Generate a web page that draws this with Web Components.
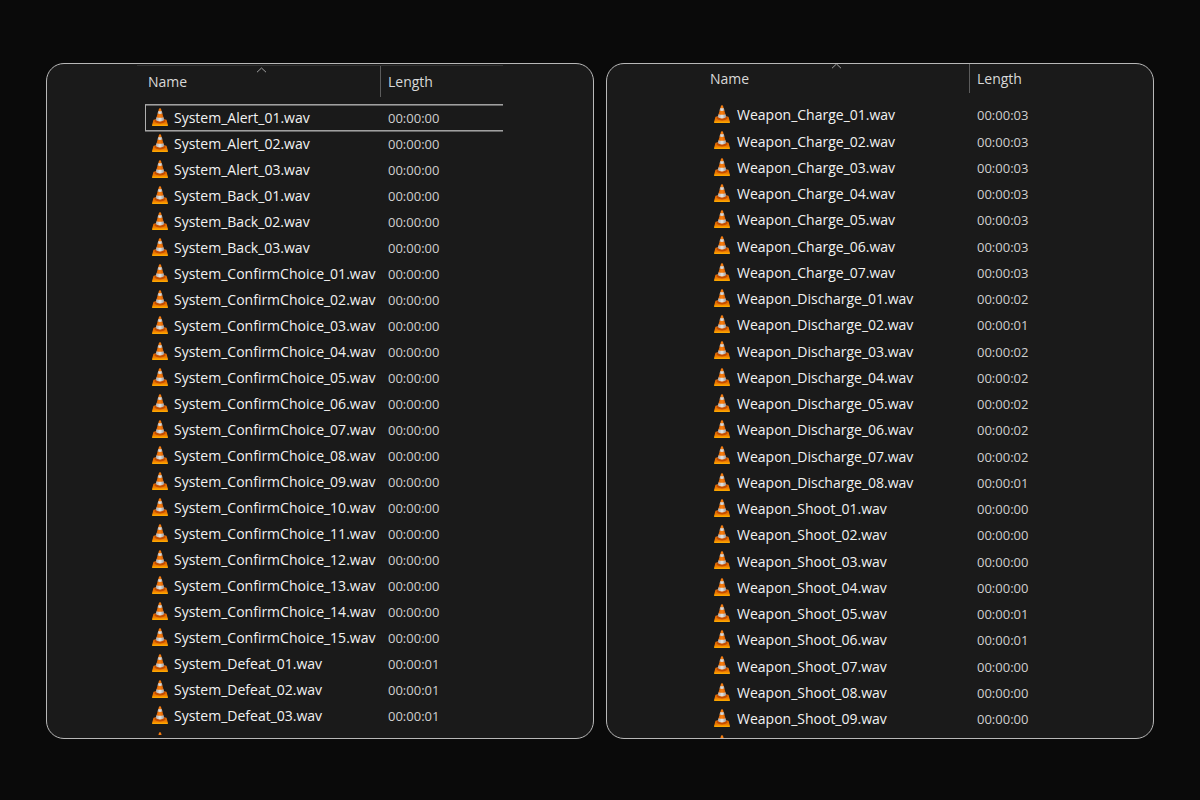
<!DOCTYPE html>
<html lang="en">
<head>
<meta charset="utf-8">
<meta name="viewport" content="width=device-width, initial-scale=1">
<title>Sound files</title>
<style>
	body{margin:0; background:#0a0a0a; color:#f2f2f2; font-family:"Open Sans","Noto Sans",sans-serif; font-size:14px}
	.weapon{
		--list-inset:100px;
		--list-indent:0px;
		--list-top:0px;
		--list-bottom:0px;
		--top-line:0px;
		--name-width:262px;
		--divider:29px;
		--head-height:38px;
		--fourth-row:27px;
		--arrow-top:-1px;
		--icon-gap:7px;
	}
</style>
</head>
<body>
<sound-page>
	<list-card><sound-list group="system"></sound-list></list-card>
	<list-card class="weapon"><sound-list group="weapon"></sound-list></list-card>
</sound-page>

<script>
// file name prefix + length in seconds of each numbered take
const SOUNDS = {
	system: [
		["System_Alert", [0, 0, 0]],
		["System_Back", [0, 0, 0]],
		["System_ConfirmChoice", [0, 0, 0, 0, 0, 0, 0, 0, 0, 0, 0, 0, 0, 0, 0]],
		["System_Defeat", [1, 1, 1]],
	],
	weapon: [
		["Weapon_Charge", [3, 3, 3, 3, 3, 3, 3]],
		["Weapon_Discharge", [2, 1, 2, 2, 2, 2, 2, 1]],
		["Weapon_Shoot", [0, 0, 0, 0, 1, 1, 0, 0, 0]],
	],
};
const SELECTED = "System_Alert_01.wav";

// sound-page.js
class SoundPage extends HTMLElement {
	constructor() {
		super();
		this.attachShadow({ mode: "open" }).innerHTML = `
			<style>
				:host{display:grid; grid-template-columns:1fr 1fr; gap:12px; box-sizing:border-box; height:100vh; padding:63px 46px 61px}
			</style>
			<slot></slot>
		`;
	}
}
customElements.define("sound-page", SoundPage);

// list-card.js
class ListCard extends HTMLElement {
	constructor() {
		super();
		this.attachShadow({ mode: "open" }).innerHTML = `
			<style>
				:host{display:flex; box-sizing:border-box; min-width:0; min-height:0; overflow:hidden; background:#1a1a1a;
					border:1px solid #b8b8b8; border-radius:18px}
				::slotted(*){flex:1; min-width:0}
			</style>
			<slot></slot>
		`;
	}
}
customElements.define("list-card", ListCard);

// cone-icon.js
class ConeIcon extends HTMLElement {
	constructor() {
		super();
		this.attachShadow({ mode: "open" }).innerHTML = `
			<style>
				:host{display:block; width:16px; height:18px}
				svg{display:block}
			</style>
			<svg width="16" height="18" viewBox="0 0 16 18" aria-hidden="true">
				<defs>
					<linearGradient id="base" x1="0" y1="0" x2="0" y2="1">
						<stop offset="0" stop-color="#dc6200"/>
						<stop offset=".6" stop-color="#ee7c00"/>
						<stop offset="1" stop-color="#ffb000"/>
					</linearGradient>
					<linearGradient id="body" x1="0" y1="0" x2="1" y2="0">
						<stop offset="0" stop-color="#e06000"/>
						<stop offset=".5" stop-color="#f88010"/>
						<stop offset="1" stop-color="#d05600"/>
					</linearGradient>
					<linearGradient id="band" x1="0" y1="0" x2="1" y2="0">
						<stop offset="0" stop-color="#a8a8a8"/>
						<stop offset=".5" stop-color="#e6e6e6"/>
						<stop offset="1" stop-color="#989898"/>
					</linearGradient>
				</defs>
				<path fill="url(#base)" d="M2.2 11.4h11.6q.6 0 .8.6L16 17.2q.1.8-.7.8H.7q-.8 0-.7-.8L1.4 12q.2-.6.8-.6z"/>
				<path fill="#c44c00" d="M3.2 11.6h9.6l.6 2.2q-2 1.6-5.4 1.6t-5.4-1.6z"/>
				<path fill="url(#body)" d="M7.1.6Q8-.3 8.9.6L12.3 12Q11 13.4 8 13.4T3.7 12z"/>
				<path fill="url(#band)" d="M6.3 2.9q1.7.7 3.4 0L10.5 5.6Q8 6.5 5.5 5.6z"/>
				<path fill="url(#band)" d="M4.5 9.2q3.5 1.1 7 0l.8 2.8Q11 13.4 8 13.4T3.7 12z"/>
			</svg>
		`;
	}
}
customElements.define("cone-icon", ConeIcon);

// sound-list.js
class SoundList extends HTMLElement {
	constructor() {
		super();
		this._shadow = this.attachShadow({ mode: "open" });
	}
	connectedCallback() {
		this._render();
	}
	_files() {
		const groups = SOUNDS[this.getAttribute("group")] || [];
		return groups.flatMap(([prefix, lengths]) =>
			lengths.map((sec, i) => ({
				name: `${prefix}_${String(i + 1).padStart(2, "0")}.wav`,
				length: `00:00:${String(sec).padStart(2, "0")}`,
			})),
		);
	}
	_row(f) {
		return `
			<tr${f.name === SELECTED ? ' class="selected"' : ""}>
				<td><div class="file"><cone-icon></cone-icon><span>${f.name}</span></div></td>
				<td class="length">${f.length}</td>
			</tr>`;
	}
	_render() {
		this._shadow.innerHTML = `
			<style>
				:host{display:block; overflow:hidden; box-sizing:border-box;
					margin:var(--list-top,1px) 90px var(--list-bottom,3px) var(--list-inset,90px);
					padding-left:var(--list-indent,8px);
					border-top:var(--top-line,1px) solid #333}
				table{width:100%; table-layout:fixed; border-spacing:0}
				th,td{padding:0; text-align:left; font-weight:400}
				th{height:var(--head-height,39px); vertical-align:top}
				th:first-child{position:relative; width:var(--name-width,235px)}
				button{display:block; width:100%; height:var(--divider,31px); padding:0 0 0 3px; border:0; background:none;
					color:#d8d8d8; font:inherit; text-align:left}
				th + th button{padding-left:7px; border-left:1px solid #5c5c5c}
				/* sort arrow sits over the middle of the column */
				.arrow{position:absolute; left:0; right:3px; top:var(--arrow-top,1px); margin:0 auto; display:block}
				tbody tr{height:26px}
				tbody tr:nth-child(4n + 2){height:var(--fourth-row,26px)}
				td{white-space:nowrap; line-height:20px}
				.file{display:flex; align-items:center; gap:var(--icon-gap,6px); padding-left:7px}
				.file cone-icon{margin-bottom:3px}
				.length{padding-left:8px; color:#cfcfcf; font-size:13px}
				.selected td{box-shadow:0 -1px #a0a0a0, inset 0 1px #666, inset 0 -1px #a0a0a0, 0 1px #666}
				.selected td:first-child{box-shadow:0 -1px #a0a0a0, inset 1px 0 #b0b0b0, inset 0 1px #666, inset 0 -1px #a0a0a0, 0 1px #666}
			</style>
			<table>
				<thead>
					<tr>
						<th scope="col" aria-sort="ascending">
							<button type="button">Name</button>
							<svg class="arrow" width="11" height="6" viewBox="0 0 11 6" aria-hidden="true"><path d="M1 5.2L5.5 1L10 5.2" fill="none" stroke="#a0a0a0"/></svg>
						</th>
						<th scope="col"><button type="button">Length</button></th>
					</tr>
				</thead>
				<tbody>
					${this._files().map((f) => this._row(f)).join("")}
					<tr><td><div class="file"><cone-icon></cone-icon></div></td><td></td></tr>
				</tbody>
			</table>
		`;
	}
}
customElements.define("sound-list", SoundList);
</script>
</body>
</html>
